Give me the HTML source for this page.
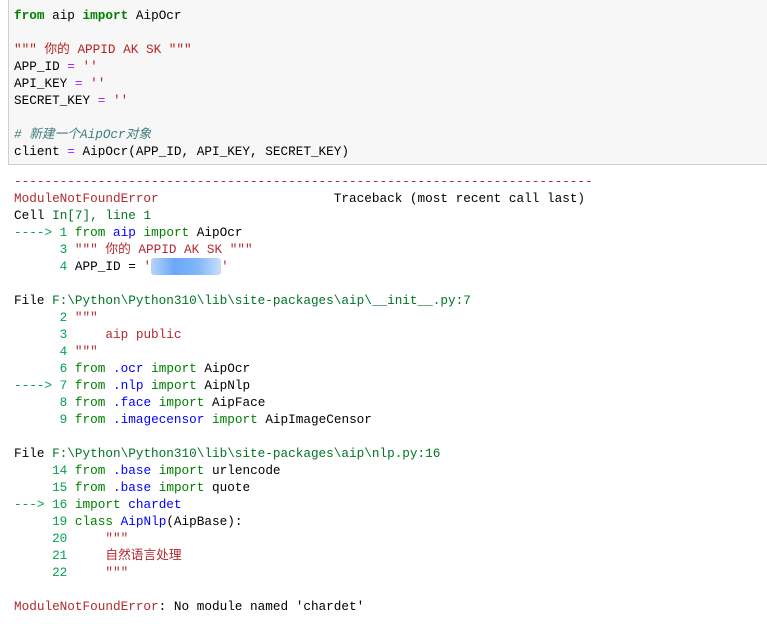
<!DOCTYPE html>
<html><head><meta charset="utf-8"><style>
body{margin:0;width:767px;height:624px;background:#fff;overflow:hidden;font-family:"Liberation Mono","Noto Sans CJK SC",monospace;font-size:12.7px;color:#000}
.in{position:absolute;left:8px;top:-1px;width:770px;height:166px;background:#f7f7f7;border:1px solid #cfcfcf;box-sizing:border-box}
pre{margin:0;font:inherit;line-height:17px;white-space:pre;position:absolute;left:14px}
.k{color:#008000;font-weight:bold}.s{color:#ba2121}.o{color:#aa22ff}.c{color:#3d7b7b;font-style:italic}
.r{color:#b22b31}.g{color:#00a250}.G{color:#007427}.b{color:#0000ff}.B{color:#0000ff;font-weight:bold}.kk{color:#008000}
.blur{display:inline-block;width:70px;height:17px;vertical-align:top;background:linear-gradient(90deg,#b8d4fa,#6aa8f8,#80b6fa,#c9def9);border-radius:3px}
</style></head><body>
<div class="in"></div>
<pre style="top:7px"><span class="k">from</span> aip <span class="k">import</span> AipOcr

<span class="s">""" 你的 APPID AK SK """</span>
APP_ID <span class="o">=</span> <span class="s">''</span>
API_KEY <span class="o">=</span> <span class="s">''</span>
SECRET_KEY <span class="o">=</span> <span class="s">''</span>

<span class="c"># 新建一个AipOcr对象</span>
client <span class="o">=</span> AipOcr(APP_ID, API_KEY, SECRET_KEY)</pre>
<pre style="top:173px"><span class="r">----------------------------------------------------------------------------</span>
<span class="r">ModuleNotFoundError</span>                       Traceback (most recent call last)
Cell <span class="G">In[7], line 1</span>
<span class="g">----&gt; 1</span> <span class="kk">from</span> <span class="b">aip</span> <span class="kk">import</span> AipOcr
<span class="g">      3</span> <span class="r">""" 你的 APPID AK SK """</span>
<span class="g">      4</span> APP_ID = <span class="r">'</span><span class="blur"></span><span class="r">'</span>

File <span class="G">F:\Python\Python310\lib\site-packages\aip\__init__.py:7</span>
<span class="g">      2</span> <span class="r">"""</span>
<span class="g">      3</span> <span class="r">    aip public</span>
<span class="g">      4</span> <span class="r">"""</span>
<span class="g">      6</span> <span class="kk">from</span> <span class="b">.ocr</span> <span class="kk">import</span> AipOcr
<span class="g">----&gt; 7</span> <span class="kk">from</span> <span class="b">.nlp</span> <span class="kk">import</span> AipNlp
<span class="g">      8</span> <span class="kk">from</span> <span class="b">.face</span> <span class="kk">import</span> AipFace
<span class="g">      9</span> <span class="kk">from</span> <span class="b">.imagecensor</span> <span class="kk">import</span> AipImageCensor

File <span class="G">F:\Python\Python310\lib\site-packages\aip\nlp.py:16</span>
<span class="g">     14</span> <span class="kk">from</span> <span class="b">.base</span> <span class="kk">import</span> urlencode
<span class="g">     15</span> <span class="kk">from</span> <span class="b">.base</span> <span class="kk">import</span> quote
<span class="g">---&gt; 16</span> <span class="kk">import</span> <span class="b">chardet</span>
<span class="g">     19</span> <span class="kk">class</span> <span class="b">AipNlp</span>(AipBase):
<span class="g">     20</span> <span class="r">    """</span>
<span class="g">     21</span> <span class="r">    自然语言处理</span>
<span class="g">     22</span> <span class="r">    """</span>

<span class="r">ModuleNotFoundError</span>: No module named 'chardet'</pre>
</body></html>
